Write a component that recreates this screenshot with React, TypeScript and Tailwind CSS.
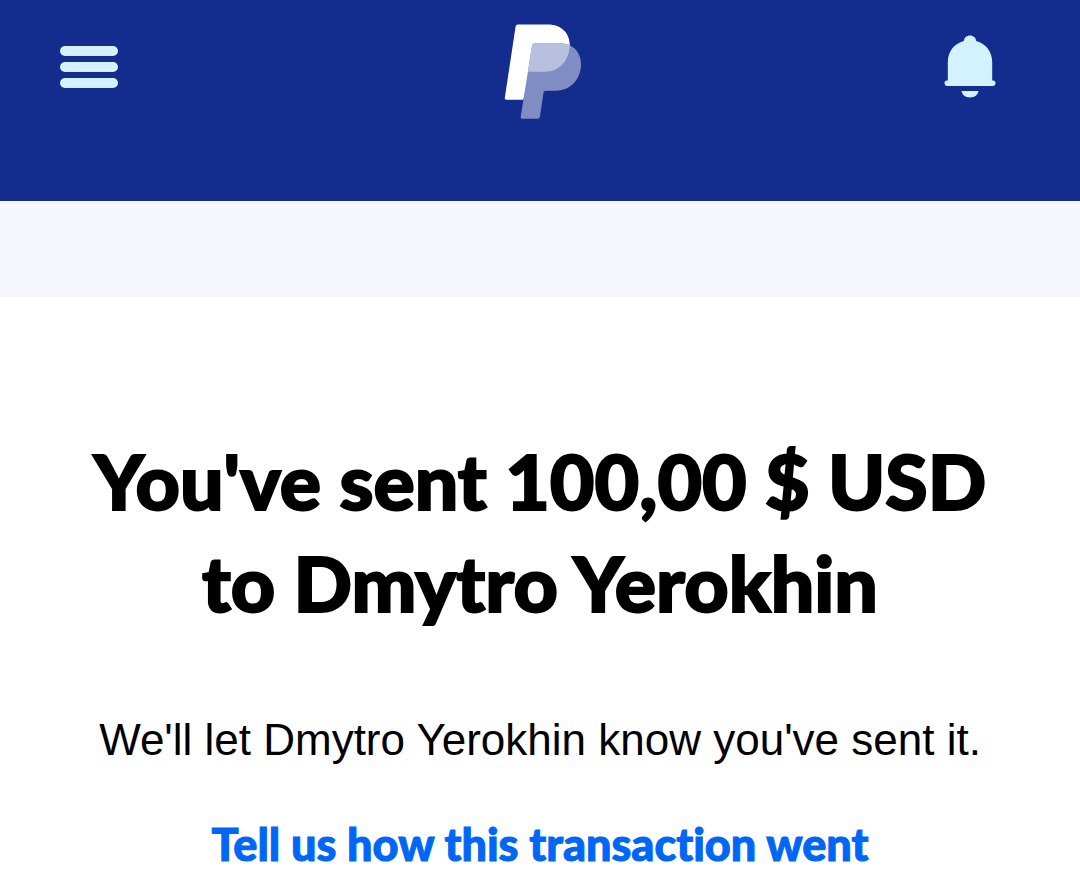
import { useState } from 'react'

export default function App() {
  return (
    <div className="w-full bg-white text-black">
      <Header />
      <div className="h-24 bg-[#f5f6fb]" />
      <main className="flex flex-col items-center px-12 pt-[132px] text-center">
        <h1 className="font-['Lato',sans-serif] text-[77px] leading-[102px] font-black [-webkit-text-stroke:2px_currentColor]">
          You've sent 100,00 $ USD
          <br />
          to Dmytro Yerokhin
        </h1>
        <p className="mt-[74px] font-['Liberation_Sans',sans-serif] text-[44px] leading-[66px]">
          We'll let Dmytro Yerokhin know you've sent it.
        </p>
        <a
          href="#feedback"
          className="mt-[38px] font-['Lato',sans-serif] text-[45px] leading-[66px] font-black text-[#0066f5] [font-variant-ligatures:none] [-webkit-text-stroke:1px_currentColor]"
        >
          Tell us how this transaction went
        </a>
      </main>
    </div>
  )
}

function Header() {
  const [menuOpen, setMenuOpen] = useState(false)

  return (
    <header className="grid h-[201px] grid-cols-3 items-start bg-[#142c8e] px-[60px] pt-6">
      <button
        type="button"
        aria-label="Menu"
        aria-expanded={menuOpen}
        onClick={() => setMenuOpen(!menuOpen)}
        className="mt-[22px] flex w-[58px] flex-col gap-[6px] justify-self-start"
      >
        <span className="h-[10px] w-full rounded-full bg-[#d3f1ff]" />
        <span className="h-[10px] w-full rounded-full bg-[#d3f1ff]" />
        <span className="h-[10px] w-full rounded-full bg-[#d3f1ff]" />
      </button>
      <a href="#home" aria-label="PayPal" className="justify-self-center">
        <Logo />
      </a>
      <button type="button" aria-label="Notifications" className="mr-6 mt-[11px] justify-self-end">
        <Bell />
      </button>
    </header>
  )
}

function Logo() {
  return (
    <svg width="84" height="96" viewBox="-6 0 84 96" aria-hidden="true">
      <path
        fill="#fff"
        d="M13.9 0.5H44C57 0.5 65.7 9 65.7 20.5C65.7 36 56 47.7 41 47.7H26L19.3 75.7H2.3C1.2 75.7 0.6 75 0.8 73.8L11.6 2.5C11.8 1.2 12.7 0.5 13.9 0.5Z"
      />
      <path
        fill="#808dc4"
        d="M30.5 19.3H56C68.5 19.3 77 28 77 40C77 55.5 66.5 66.7 51.5 66.7H42C40.5 66.7 39.7 67.4 39.5 68.8L35.9 92.7C35.7 94 35 94.7 33.7 94.7H18.3C17.1 94.7 16.5 94 16.7 92.7L28.1 21.3C28.3 20 29.2 19.3 30.5 19.3Z"
      />
      <path
        fill="#b9bfde"
        d="M30.5 19.3H56C59.5 19.3 62.8 20 65.7 21.3C65.4 36.4 55.8 47.7 41 47.7H23.9L28.1 21.3C28.3 20 29.2 19.3 30.5 19.3Z"
      />
    </svg>
  )
}

function Bell() {
  return (
    <svg width="52" height="63" viewBox="0 0 52 63" fill="#d3f1ff" aria-hidden="true">
      <path d="M26 0.5C29.5 0.5 31.8 2.8 32.2 6C41.8 8.8 48.2 16.5 48.2 27V45.5H49.2C50.7 45.5 51.5 46.7 51.5 48.1C51.5 49.6 50.6 51 49 51H3C1.4 51 0.5 49.6 0.5 48.1C0.5 46.7 1.3 45.5 2.8 45.5H3.8V27C3.8 16.5 10.2 8.8 19.8 6C20.2 2.8 22.5 0.5 26 0.5Z" />
      <path d="M17.5 56H34.5C34 59.7 30.5 62.5 26 62.5C21.5 62.5 18 59.7 17.5 56Z" />
    </svg>
  )
}
